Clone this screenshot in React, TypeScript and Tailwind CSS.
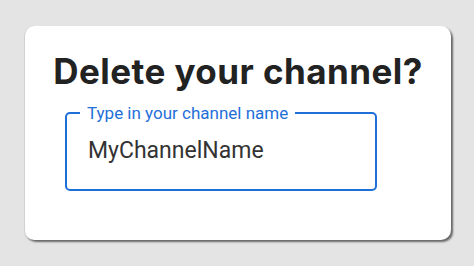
import React from "react";

export default function App() {
  return (
    <div className="w-[474px] h-[266px] bg-[#e4e4e4] overflow-hidden pt-[26px] pl-[24px]">
      <div className="w-[427px] h-[214px] bg-white rounded-[10px] shadow-[2px_2px_2px_rgba(0,0,0,0.55)] border-l border-[#d0d0d0] flex flex-col items-center">
        <h1
          className="mt-[25px] text-[35px] leading-[40px] font-bold text-[#222222] tracking-[0.45px]"
          style={{ fontFamily: "Inter, 'Noto Sans', sans-serif" }}
        >
          Delete your channel?
        </h1>
        <fieldset
          className="self-start ml-[40px] mt-[12px] w-[312px] h-[88px] border-2 border-[#1f6fd8] rounded-[5px] px-[21px] pt-0"
          style={{ fontFamily: "Roboto, sans-serif" }}
        >
          <legend className="ml-[-8px] px-[7px] text-[17px] leading-[20px] text-[#1f6fd8]">
            Type in your channel name
          </legend>
          <div className="mt-[14px] text-[23px] leading-[28px] text-[#333333]">MyChannelName</div>
        </fieldset>
      </div>
    </div>
  );
}
